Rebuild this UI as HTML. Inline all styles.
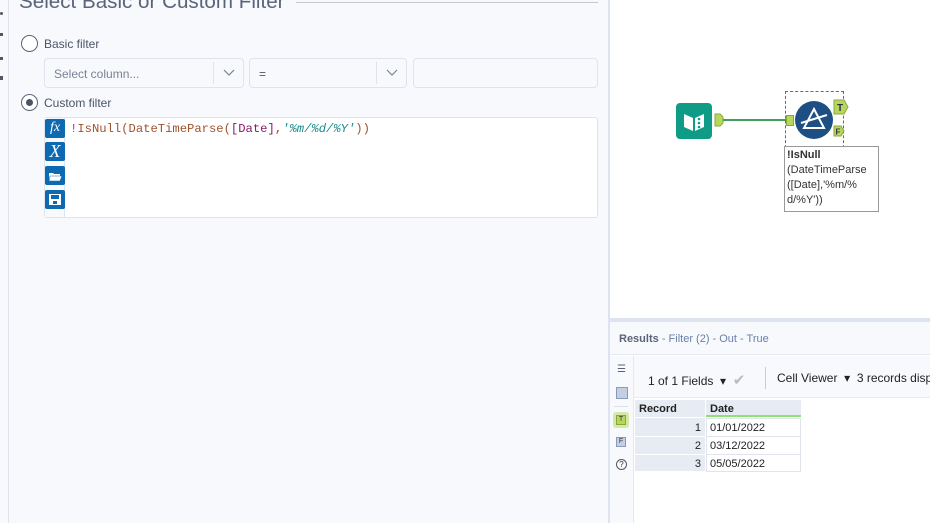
<!DOCTYPE html><html><head><style>
*{box-sizing:border-box;margin:0;padding:0}
body{width:930px;height:523px;overflow:hidden;position:relative;background:#fff;font-family:"Liberation Sans",sans-serif;font-size:12px;color:#333}
.a{position:absolute}
</style></head><body>
<div class="a" style="left:0;top:0;width:608px;height:523px;background:#f7f9fd"></div>
<div class="a" style="left:8px;top:0;width:1px;height:523px;background:#dfe4ee"></div>
<div class="a" style="left:0;top:12px;width:3px;height:3px;background:#556;border-radius:2px"></div>
<div class="a" style="left:0;top:33px;width:3px;height:3px;background:#556"></div>
<div class="a" style="left:0;top:57px;width:3px;height:3px;background:#556"></div>
<div class="a" style="left:0;top:76px;width:3px;height:4px;background:#556"></div>
<div class="a" style="left:608px;top:0;width:2px;height:523px;background:#dde4ef"></div>
<div class="a" style="left:19px;top:-10px;font-size:20.6px;color:#5a6478;white-space:nowrap">Select Basic or Custom Filter</div>
<div class="a" style="left:296px;top:2px;width:302px;height:1px;background:#c8c8c8"></div>
<div class="a" style="left:21px;top:35px;width:17px;height:17px;border:1.5px solid #5a6478;border-radius:50%;background:#fff"></div>
<div class="a" style="left:44px;top:37px;color:#4a5468">Basic filter</div>
<div class="a" style="left:44px;top:58px;width:200px;height:30px;border:1px solid #dfe3ee;border-radius:4px;background:#f7f9fd"></div>
<div class="a" style="left:54px;top:67px;color:#7a8294">Select column...</div>
<div class="a" style="left:213px;top:62px;width:1px;height:22px;background:#dfe3ee"></div>
<svg class="a" style="left:222px;top:68px" width="14" height="10"><path d="M2 2 L7 7 L12 2" stroke="#7a8294" fill="none" stroke-width="1.2"/></svg>
<div class="a" style="left:249px;top:58px;width:158px;height:30px;border:1px solid #dfe3ee;border-radius:4px"></div>
<div class="a" style="left:259px;top:67px;color:#4a5468">=</div>
<div class="a" style="left:376px;top:62px;width:1px;height:22px;background:#dfe3ee"></div>
<svg class="a" style="left:385px;top:68px" width="14" height="10"><path d="M2 2 L7 7 L12 2" stroke="#7a8294" fill="none" stroke-width="1.2"/></svg>
<div class="a" style="left:413px;top:58px;width:185px;height:30px;border:1px solid #dfe3ee;border-radius:4px"></div>
<div class="a" style="left:21px;top:94px;width:17px;height:17px;border:1.5px solid #5a6478;border-radius:50%;background:#fff"></div>
<div class="a" style="left:26px;top:99px;width:7px;height:7px;border-radius:50%;background:#4a5468"></div>
<div class="a" style="left:44px;top:96px;color:#4a5468">Custom filter</div>
<div class="a" style="left:44px;top:117px;width:554px;height:101px;border:1px solid #dfe3ee;border-radius:3px;background:#fff"></div>
<div class="a" style="left:64px;top:118px;width:1px;height:99px;background:#dfe3ee"></div>
<div class="a" style="left:45px;top:118px;width:19px;height:99px;background:#f7f9fd"></div>
<div class="a" style="left:45px;top:119px;width:20px;height:19px;background:#0d6ab0;border-radius:2px;color:#fff;font-family:'Liberation Serif';font-style:italic;font-size:14px;text-align:center;line-height:18px">fx</div>
<div class="a" style="left:45px;top:142px;width:20px;height:19px;background:#0d6ab0;border-radius:2px;color:#fff;font-family:'Liberation Serif';font-style:italic;font-size:18px;text-align:center;line-height:18px">X</div>
<div class="a" style="left:45px;top:166px;width:20px;height:19px;background:#0d6ab0;border-radius:2px"></div>
<svg class="a" style="left:47px;top:168px" width="16" height="15"><path d="M2 5h4l1 1h6v6H2z" fill="#fff"/><path d="M3 8h12l-2 5H2z" fill="#fff" stroke="#0d6ab0" stroke-width=".6"/></svg>
<div class="a" style="left:45px;top:190px;width:20px;height:19px;background:#0d6ab0;border-radius:2px"></div>
<svg class="a" style="left:47px;top:192px" width="16" height="15"><rect x="2" y="2" width="12" height="11" fill="#fff"/><rect x="4" y="3" width="8" height="4" fill="#0d6ab0"/><rect x="6" y="9" width="4" height="3" fill="#0d6ab0"/></svg>
<div class="a" style="left:70px;top:122px;font-family:'Liberation Mono',monospace;font-size:12.2px;white-space:nowrap"><span style="color:#e010c0">!</span><span style="color:#a0522d">IsNull(DateTimeParse(</span><span style="color:#8b1a6b">[Date]</span><span style="color:#a0522d">,</span><span style="color:#1a8a8a;font-style:italic">'%m/%d/%Y'</span><span style="color:#a0522d">))</span></div>

<!-- canvas -->
<div class="a" style="left:676px;top:103px;width:36px;height:36px;background:#0e9c87;border-radius:4px"></div>
<svg class="a" style="left:676px;top:103px" width="36" height="36"><path d="M8 11 L17 15 L17 28 L8 24Z M28 11 L19 15 L19 28 L28 24Z" fill="#fff"/><circle cx="23" cy="16" r="1.3" fill="#0e9c87"/><circle cx="23" cy="20" r="1.3" fill="#0e9c87"/><circle cx="23" cy="24" r="1.3" fill="#0e9c87"/></svg>
<svg class="a" style="left:714px;top:113px" width="10" height="14"><path d="M1 1h5l3 3v6l-3 3H1z" fill="#b7d65c" stroke="#8aa83a"/></svg>
<div class="a" style="left:723px;top:119px;width:63px;height:2px;background:#3ea05a"></div>
<div class="a" style="left:785px;top:91px;width:59px;height:62px;border:1px dashed #2b78c8"></div>
<div class="a" style="left:786px;top:115px;width:8px;height:11px;background:#b7d65c;border:1px solid #8aa83a"></div>
<div class="a" style="left:795px;top:101px;width:38px;height:38px;border-radius:50%;background:#1e4f84"></div>
<svg class="a" style="left:795px;top:101px" width="38" height="38"><path d="M19 8 L29 27 L9 27Z" fill="none" stroke="#fff" stroke-width="2"/><path d="M6 22 L32 14" stroke="#fff" stroke-width="2"/></svg>
<svg class="a" style="left:833px;top:99px" width="16" height="16"><path d="M1 1h10l4 7-4 7H1z" fill="#b7d65c" stroke="#8aa83a"/><text x="4" y="12" font-size="10" font-weight="bold" fill="#334" font-family="Liberation Sans">T</text></svg>
<svg class="a" style="left:833px;top:125px" width="12" height="12"><path d="M1 1h7l3 5-3 5H1z" fill="#b7d65c" stroke="#8aa83a"/><text x="2.5" y="9.5" font-size="8" font-weight="bold" fill="#334" font-family="Liberation Sans">F</text></svg>
<div class="a" style="left:784px;top:146px;width:95px;height:66px;border:1px solid #999;background:#fff"></div>
<div class="a" style="left:787px;top:148px;font-size:11px;line-height:15px;color:#333"><b>!IsNull</b><br>(DateTimeParse<br>([Date],'%m/%<br>d/%Y'))</div>

<!-- results -->
<div class="a" style="left:610px;top:318px;width:320px;height:4px;background:#dde4ef"></div>
<div class="a" style="left:610px;top:322px;width:320px;height:33px;background:#f7f9fd;border-bottom:1px solid #e4e8f0"></div>
<div class="a" style="left:619px;top:333px;font-size:11px;color:#5a6478"><b>Results</b> <span style="color:#6a7fa8">- Filter (2) - Out - True</span></div>
<div class="a" style="left:610px;top:356px;width:24px;height:167px;background:#f7f9fd;border-right:1px solid #e4e8f0"></div>
<div class="a" style="left:634px;top:356px;width:296px;height:42px;background:#f7f9fd;border-bottom:1px solid #e8ebf2"></div>
<div class="a" style="left:617px;top:364px;font-size:10px;color:#5a6478">☰</div>
<div class="a" style="left:616px;top:387px;width:12px;height:12px;background:#c4cfe2;border:1px solid #8a9ab8"></div>
<div class="a" style="left:614px;top:406px;width:14px;height:1px;background:#dde2ea"></div>
<div class="a" style="left:613px;top:412px;width:16px;height:16px;background:#d6e8a8;border-radius:3px"></div>
<div class="a" style="left:616px;top:415px;width:10px;height:10px;background:#b7d65c;border:1px solid #8aa83a;font-size:7px;line-height:8px;text-align:center">T</div>
<div class="a" style="left:616px;top:437px;width:10px;height:10px;background:#c4cfe2;border:1px solid #8a9ab8;font-size:7px;line-height:8px;text-align:center">F</div>
<div class="a" style="left:616px;top:459px;width:11px;height:11px;border:1px solid #556;border-radius:50%;font-size:8px;line-height:9px;text-align:center">?</div>
<div class="a" style="left:648px;top:371px;color:#222;white-space:nowrap">1 of 1 Fields &nbsp;▾ &nbsp;<span style="color:#bbb;font-size:15px">✔</span></div>
<div class="a" style="left:765px;top:367px;width:1px;height:22px;background:#ccc"></div>
<div class="a" style="left:777px;top:371px;color:#222;white-space:nowrap">Cell Viewer &nbsp;▾ &nbsp;3 records displayed</div>
<div class="a" style="left:635px;top:400px;width:70px;height:17px;background:#e6ebf4"></div>
<div class="a" style="left:639px;top:403px;font-size:11px;font-weight:bold;color:#222">Record</div>
<div class="a" style="left:706px;top:400px;width:95px;height:17px;background:#e6ebf4;border-bottom:2px solid #8fe070"></div>
<div class="a" style="left:710px;top:403px;font-size:11px;font-weight:bold;color:#222">Date</div>
<div class="a" style="left:635px;top:418px;width:70px;height:53px;background:#e6ebf4"></div>
<div class="a" style="left:706px;top:418px;width:95px;height:54px;border:1px solid #e0e4ec;background:#fff"></div>
<div class="a" style="left:635px;top:436px;width:166px;height:1px;background:#fff"></div>
<div class="a" style="left:706px;top:436px;width:95px;height:1px;background:#e0e4ec"></div>
<div class="a" style="left:635px;top:454px;width:166px;height:1px;background:#fff"></div>
<div class="a" style="left:706px;top:454px;width:95px;height:1px;background:#e0e4ec"></div>
<div class="a" style="left:640px;top:419px;width:61px;font-size:11px;line-height:18px;text-align:right;color:#222">1<br>2<br>3</div>
<div class="a" style="left:710px;top:419px;font-size:11px;line-height:18px;color:#222">01/01/2022<br>03/12/2022<br>05/05/2022</div>
</body></html>
